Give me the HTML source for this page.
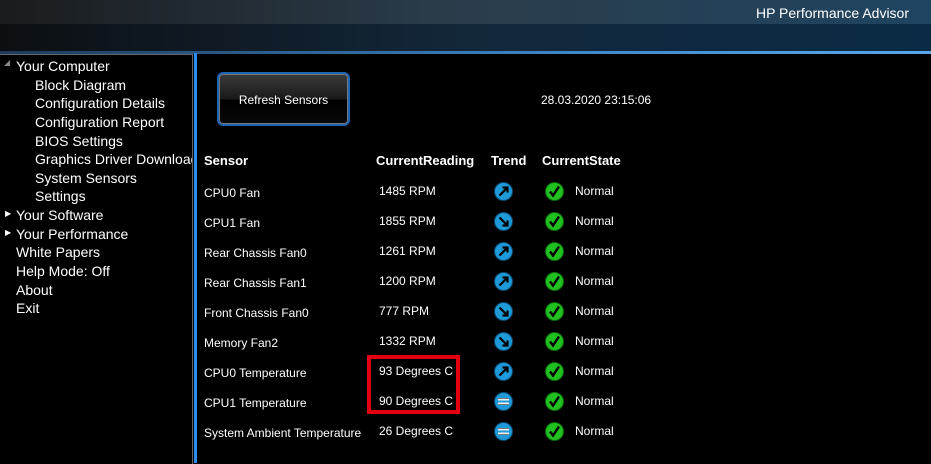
<!DOCTYPE html>
<html><head><style>
body{margin:0;width:931px;height:463px;background:#000;overflow:hidden;position:relative;font-family:"Liberation Sans",sans-serif;color:#fff}
.hdr{position:absolute;left:0;top:0;width:931px;height:53px;background:linear-gradient(90deg,#0c0f12 0%,#13273a 50%,#0a2a45 100%)}
.hdr1{position:absolute;left:0;top:0;width:931px;height:24px;background:linear-gradient(90deg,#1a1c1e 0%,#2b3d4c 50%,#1f4460 100%)}
.hline{position:absolute;left:0;top:51px;width:931px;height:3px;background:linear-gradient(90deg,#1d3a5a,#3d86c8 60%,#5aa7e8)}
.title{position:absolute;right:22px;top:5px;font-size:14px}
.lp{position:absolute;left:0;top:54px;width:192px;height:409px;border-top:1px solid #666;border-right:1px solid #666;overflow:hidden}
.blue{position:absolute;left:194px;top:53px;width:3px;height:410px;background:#2a8ef0}
.m{position:absolute;font-size:14px;white-space:nowrap}
.t{position:absolute;font-size:12px;white-space:nowrap}
.h{position:absolute;font-size:13px;font-weight:bold}
.btn{position:absolute;left:217px;top:72px;width:129px;height:50px;border:2px solid #1e64b4;border-radius:6px;background:linear-gradient(#3a3a3a,#1a1a1a 50%,#000 52%,#080808);font-size:12px;text-align:center;line-height:52px;box-shadow:inset 0 0 0 1px #777}
.ic{position:absolute;width:19px;height:19px;border-radius:50%;box-sizing:border-box}
.tr{background:#1e9ad8;border:1px solid #0a4a70}
.ok{background:#20c020;border:1px solid #0a6a0a}
.red{position:absolute;left:367px;top:355px;width:85px;height:51px;border:4px solid #e00010}
</style></head><body>
<div class="hdr"></div><div class="hdr1"></div><div class="hline"></div>
<div class="title">HP Performance Advisor</div>
<div class="lp"></div><div class="blue"></div>
<div class="m" style="left:4px;top:58px;font-size:8px;color:#888">◢</div>
<div class="m" style="left:16px;top:58px">Your Computer</div>
<div class="m" style="left:35px;top:77px">Block Diagram</div>
<div class="m" style="left:35px;top:95px">Configuration Details</div>
<div class="m" style="left:35px;top:114px">Configuration Report</div>
<div class="m" style="left:35px;top:133px">BIOS Settings</div>
<div class="m" style="left:35px;top:151px;width:157px;overflow:hidden">Graphics Driver Download</div>
<div class="m" style="left:35px;top:170px">System Sensors</div>
<div class="m" style="left:35px;top:188px">Settings</div>
<div class="m" style="left:5px;top:209px;font-size:8px">▶</div>
<div class="m" style="left:16px;top:207px">Your Software</div>
<div class="m" style="left:5px;top:228px;font-size:8px">▶</div>
<div class="m" style="left:16px;top:226px">Your Performance</div>
<div class="m" style="left:16px;top:244px">White Papers</div>
<div class="m" style="left:16px;top:263px">Help Mode: Off</div>
<div class="m" style="left:16px;top:282px">About</div>
<div class="m" style="left:16px;top:300px">Exit</div>
<div class="btn">Refresh Sensors</div>
<div class="t" style="left:541px;top:93px">28.03.2020 23:15:06</div>
<div class="h" style="left:204px;top:153px">Sensor</div>
<div class="h" style="left:376px;top:153px">CurrentReading</div>
<div class="h" style="left:491px;top:153px">Trend</div>
<div class="h" style="left:542px;top:153px">CurrentState</div>
<div id="rows"></div>
<div class="red"></div>
<script>
var d=[["CPU0 Fan","1485 RPM","u"],["CPU1 Fan","1855 RPM","d"],["Rear Chassis Fan0","1261 RPM","u"],["Rear Chassis Fan1","1200 RPM","u"],["Front Chassis Fan0","777 RPM","d"],["Memory Fan2","1332 RPM","d"],["CPU0 Temperature","93 Degrees C","u"],["CPU1 Temperature","90 Degrees C","e"],["System Ambient Temperature","26 Degrees C","e"]];
var h="";
d.forEach(function(r,i){var y=184+i*30;
h+='<div class="t" style="left:204px;top:'+(y+2)+'px">'+r[0]+'</div>';
h+='<div class="t" style="left:379px;top:'+y+'px">'+r[1]+'</div>';
var g=r[2]=="u"?'<path d="M4.5 12.5L12 5M7.5 4.5h5v5" stroke="#000" stroke-width="2.2" fill="none"/>':r[2]=="d"?'<path d="M4.5 4.5L12 12M12.5 7.5v5h-5" stroke="#000" stroke-width="2.2" fill="none"/>':'<path d="M3 6.5h11M3 10.5h11" stroke="#eee" stroke-width="2"/><path d="M3 5.3h11M3 11.7h11" stroke="#333" stroke-width=".6"/>';
h+='<div class="ic tr" style="left:494px;top:'+(y-2)+'px"><svg width="17" height="17" viewBox="0 0 17 17">'+g+'</svg></div>';
h+='<div class="ic ok" style="left:545px;top:'+(y-2)+'px"><svg width="17" height="17" viewBox="0 0 17 17"><path d="M4 8.5l3 4l6-9" stroke="#000" stroke-width="2.4" fill="none"/></svg></div>';
h+='<div class="t" style="left:575px;top:'+y+'px">Normal</div>';});
document.getElementById("rows").innerHTML=h;
</script>
</body></html>
